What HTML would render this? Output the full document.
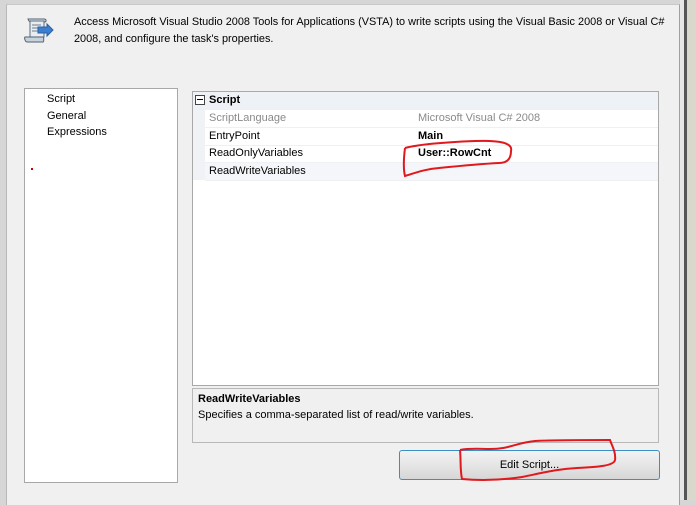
<!DOCTYPE html>
<html><head><meta charset="utf-8"><style>
html,body{margin:0;padding:0;width:696px;height:500px;overflow:hidden;background:#d6d6d6;font-family:"Liberation Sans",sans-serif;font-size:11px;color:#000}
.abs{position:absolute}
#panel{left:6px;top:4px;width:672px;height:500px;background:#f0f0f0;border-left:1px solid #b8b8b8;border-top:1px solid #c8c8c8;border-right:1px solid #a0a0a0}
#rstrip{left:680px;top:0;width:16px;height:500px;background:#e6e6e6}
#rdark{left:684px;top:0;width:3px;height:500px;background:#555}
#rbeige{left:687px;top:0;width:9px;height:500px;background:#d9d8cd}
.t{white-space:nowrap}
#list{left:24px;top:88px;width:152px;height:393px;background:#fff;border:1px solid #a8a8a8}
#grid{left:192px;top:91px;width:465px;height:293px;background:#fff;border:1px solid #a8a8a8}
.row{position:absolute;left:0;width:465px;height:17px;border-bottom:1px solid #eef0f3}
#desc{left:192px;top:388px;width:465px;height:53px;border:1px solid #b8b8b8;background:#f0f0f0}
#btn{left:399px;top:450px;width:259px;height:28px;border:1px solid #3c8fc4;border-radius:3px;background:linear-gradient(#f2f2f2,#e6e6e6 50%,#d6d6d6);text-align:center;line-height:28px}
</style></head><body>
<div id="panel" class="abs"></div>
<div id="rstrip" class="abs"></div><div id="rdark" class="abs"></div><div id="rbeige" class="abs"></div>
<svg class="abs" style="left:22px;top:16px" width="32" height="30" viewBox="0 0 32 30">
<path d="M6 3h16c2 0 3 2 1 3H9c-2 0-3-3-3-3z" fill="#dfe6ee" stroke="#506070"/>
<path d="M8 5v16h14V5z" fill="#e8edf2" stroke="#5a6a7a"/>
<path d="M10 9h9M10 12h9M10 15h8" stroke="#6a7a8a"/>
<path d="M3 21h18c1 0 1 5 0 5H5c-2 0-3-5-2-5z" fill="#c8d2dc" stroke="#506070"/>
<path d="M16 11l9 0 0-3 6 6-6 6 0-3-9 0z" fill="#3a7fd0" stroke="#2a5fa0"/>
</svg>
<div class="abs t" style="left:74px;top:14px;line-height:17px;font-size:10.9px">Access Microsoft Visual Studio 2008 Tools for Applications (VSTA) to write scripts using the Visual Basic 2008 or Visual C#<br>2008, and configure the task's properties.</div>
<div id="list" class="abs">
<div class="abs t" style="left:22px;top:2px;line-height:16.5px">Script<br>General<br>Expressions</div>
<div class="abs" style="left:6px;top:79px;width:2px;height:2px;background:#c00"></div>
</div>
<div id="grid" class="abs">
<div class="abs" style="left:0;top:0;width:12px;height:88px;background:#f0f2f5"></div>
<div class="row" style="top:0;background:#eef1f6"><div class="abs" style="left:2px;top:3px;width:8px;height:8px;border:1px solid #444;background:#fff"><div class="abs" style="left:1px;top:3px;width:6px;height:1px;background:#000"></div></div><b class="abs t" style="left:16px;top:2px">Script</b></div>
<div class="row" style="top:18px;left:12px;width:453px"><span class="abs t" style="left:4px;top:2px;color:#8a8a8a">ScriptLanguage</span><span class="abs t" style="left:213px;top:2px;color:#8a8a8a">Microsoft Visual C# 2008</span></div>
<div class="row" style="top:36px;left:12px;width:453px"><span class="abs t" style="left:4px;top:2px">EntryPoint</span><b class="abs t" style="left:213px;top:2px">Main</b></div>
<div class="row" style="top:53px;left:12px;width:453px"><span class="abs t" style="left:4px;top:2px">ReadOnlyVariables</span><b class="abs t" style="left:213px;top:2px">User::RowCnt</b></div>
<div class="row" style="top:71px;left:12px;width:453px;background:#f4f6f9"><span class="abs t" style="left:4px;top:2px">ReadWriteVariables</span></div>
</div>
<div id="desc" class="abs"><b class="abs t" style="left:5px;top:4px">ReadWriteVariables</b><span class="abs t" style="left:5px;top:20px">Specifies a comma-separated list of read/write variables.</span></div>
<div id="btn" class="abs">Edit Script...</div>
<svg class="abs" style="left:0;top:0" width="696" height="500">
<path d="M405 148c15-4 45-6 70-7 25-1 38 2 36 10 0 8-4 12-12 12-20 1-40 3-60 5-14 1-24 5-34 8-2-8-1-20 0-28" fill="none" stroke="#e0191e" stroke-width="2"/>
<path d="M460 450c1 10 0 20 2 29 20 2 40 1 60-2 20-4 35-8 55-9 20-1 37-2 38-8 1-8-3-14-5-20-20 0-60 0-75 1-20 2-25 8-45 8-10 0-20-1-30 1" fill="none" stroke="#e0191e" stroke-width="2"/>
</svg>
</body></html>
